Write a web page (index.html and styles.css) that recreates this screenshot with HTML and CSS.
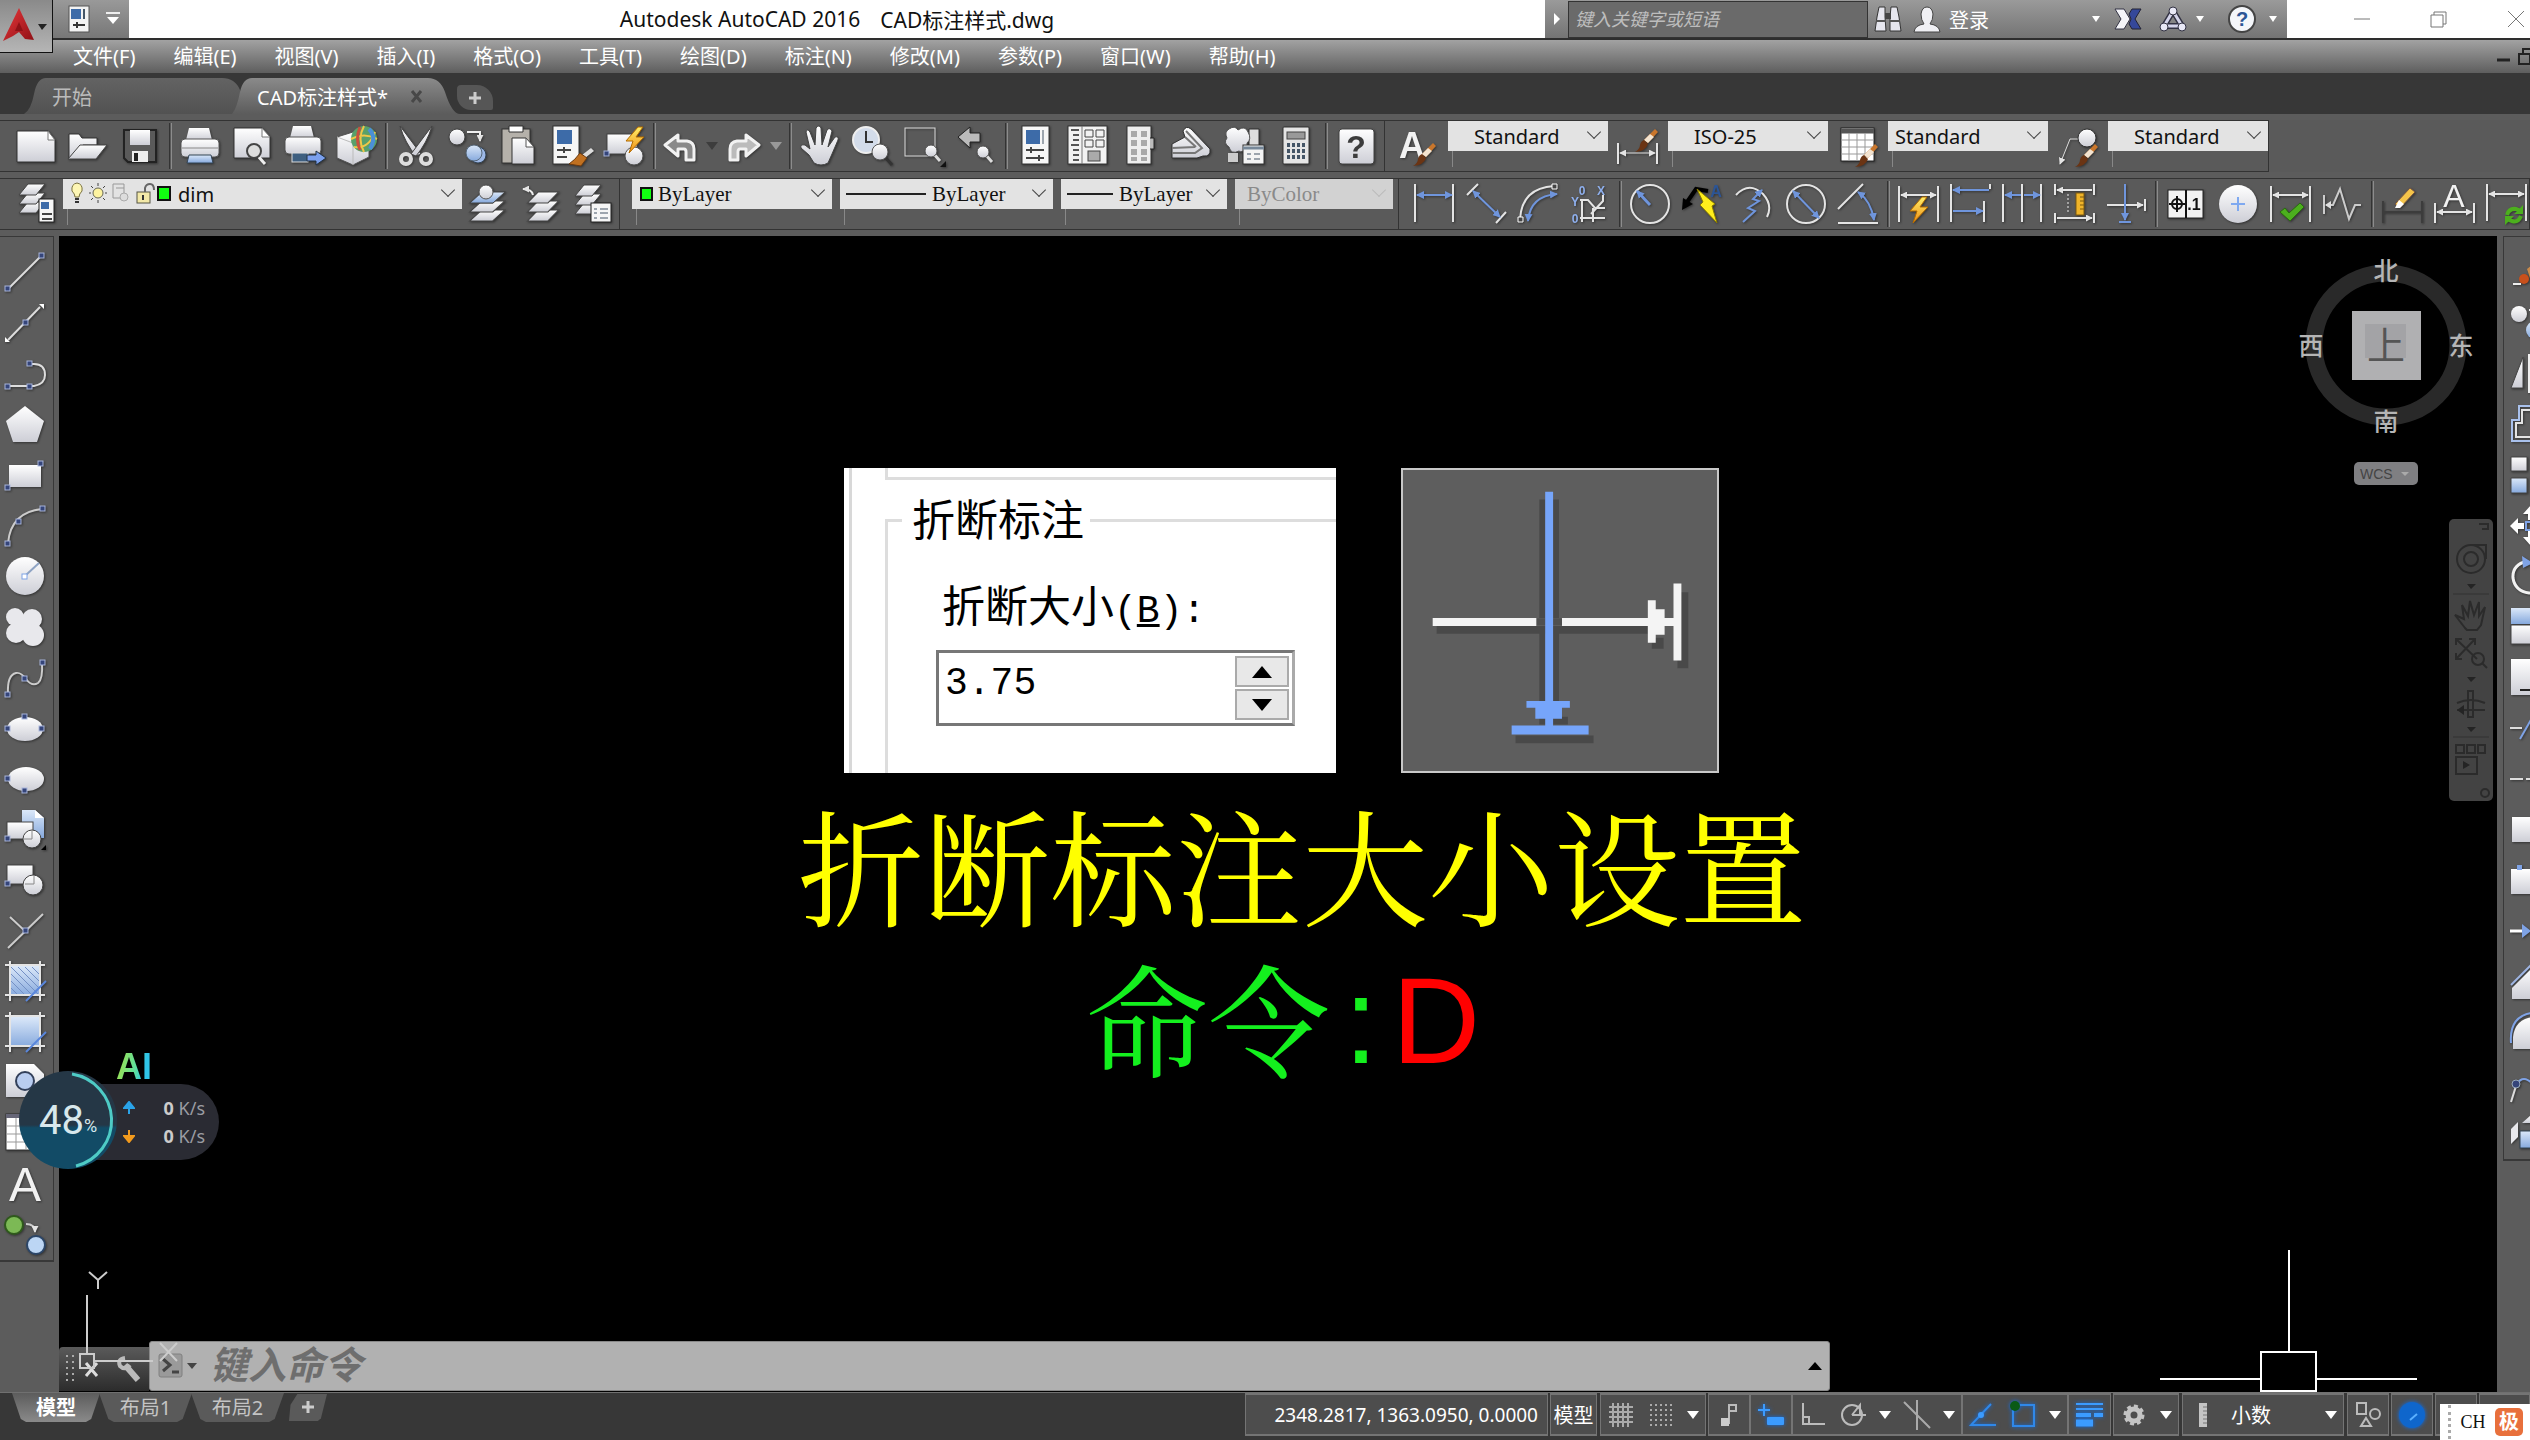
FILE: index.html
```html
<!DOCTYPE html>
<html lang="zh-CN">
<head>
  <meta charset="utf-8">
  <title>Autodesk AutoCAD 2016 CAD标注样式.dwg</title>
  <link rel="stylesheet" href="styles.css">
</head>
<body>

  <!-- Icon sprite -->
  <svg class="sprite" width="0" height="0" aria-hidden="true">
    <defs>
      <linearGradient id="gw" x1="0" y1="0" x2="0" y2="1"><stop offset="0" stop-color="#fff"/><stop offset="1" stop-color="#cdced6"/></linearGradient>
      <linearGradient id="gb" x1="0" y1="0" x2="0" y2="1"><stop offset="0" stop-color="#dbe8f9"/><stop offset="1" stop-color="#86a9dd"/></linearGradient>
      <linearGradient id="gr" x1="0" y1="0" x2="1" y2="1"><stop offset="0" stop-color="#e8363a"/><stop offset="1" stop-color="#8f1116"/></linearGradient>
      <linearGradient id="go" x1="0" y1="0" x2="0" y2="1"><stop offset="0" stop-color="#fff06a"/><stop offset="1" stop-color="#f08c12"/></linearGradient>
      <marker id="ab" viewBox="0 0 8 8" refX="7" refY="4" markerWidth="8" markerHeight="8" markerUnits="userSpaceOnUse" orient="auto-start-reverse"><path d="M0 0L8 4L0 8z" fill="#6f95dc"/></marker>
      <marker id="aw" viewBox="0 0 8 8" refX="7" refY="4" markerWidth="7" markerHeight="7" markerUnits="userSpaceOnUse" orient="auto-start-reverse"><path d="M0 0L8 4L0 8z" fill="#e4e4e4"/></marker>
      <g id="brush"><path d="M20 0L23 3L13 14L9 11z" fill="#c9762c"/><path d="M15 5L19 8L13 14L9 11z" fill="#f3e3d0"/><path d="M9 11L13 15Q11 22 0 23Q5 20 5 16Q6 12 9 11z" fill="#6b3413"/></g>
      <g id="sheets" stroke="#444" stroke-width="1"><path d="M2 32L11 21H28L19 32z" fill="url(#gw)"/><path d="M2 23L11 12H28L19 23z" fill="url(#gw)"/><path d="M2 14L11 3H28L19 14z" fill="url(#gw)"/></g>
      <g id="lens"><path d="M8 8L15 16" stroke="#ddd" stroke-width="3"/><circle cx="6" cy="6" r="6" fill="url(#gw)" stroke="#555"/></g>
      <g id="bolt"><path d="M12 0L0 14H7L3 26L18 10H10L17 0z" fill="url(#go)" stroke="#b36b00"/></g>
      <rect id="grip" width="5" height="5" fill="#35457a" stroke="#a9b6dc" stroke-width="1"/>
    </defs>

    <symbol id="i-new" viewBox="0 0 46 46"><path d="M4 8H35L42 17V39H4z" fill="url(#gw)" stroke="#333"/><path d="M35 8V17H42z" fill="#fff" stroke="#777"/></symbol>
    <symbol id="i-open" viewBox="0 0 46 46"><path d="M4 11H14L17 15H32V22H18L4 35z" fill="url(#gw)" stroke="#333"/><path d="M3 36L15 22H42L31 36z" fill="url(#gw)" stroke="#444"/></symbol>
    <symbol id="i-save" viewBox="0 0 46 46"><path d="M7 7H39V39H11L7 35z" fill="#5a5a5a" stroke="#222" stroke-width="2"/><rect x="13" y="7" width="20" height="15" fill="url(#gw)"/><rect x="15" y="28" width="16" height="11" fill="#eee"/><rect x="17" y="30" width="4" height="8" fill="#222"/></symbol>
    <symbol id="i-print" viewBox="0 0 46 46"><path d="M12 5H32L35 17H9z" fill="url(#gw)"/><rect x="4" y="16" width="38" height="18" rx="4" fill="url(#gw)" stroke="#555"/><path d="M5 25H41" stroke="#888"/><path d="M12 32H34L36 40H10z" fill="url(#gb)" stroke="#345"/></symbol>
    <symbol id="i-preview" viewBox="0 0 46 46"><path d="M5 5H33L41 14V35H5z" fill="url(#gw)" stroke="#333"/><path d="M33 5V14H41z" fill="#fff" stroke="#777"/><path d="M28 32L36 41" stroke="#eee" stroke-width="3"/><circle cx="25" cy="28" r="7" fill="#ddd" stroke="#444" stroke-width="2"/></symbol>
    <symbol id="i-plot" viewBox="0 0 46 46"><path d="M12 3H30L33 15H9z" fill="url(#gw)"/><rect x="4" y="14" width="36" height="17" rx="4" fill="url(#gw)" stroke="#555"/><rect x="11" y="30" width="16" height="9" fill="#3e5f80" stroke="#ddd"/><path d="M26 32H35V28L45 35L35 42V38H26z" fill="#7ba0ee" stroke="#234"/></symbol>
    <symbol id="i-publish" viewBox="0 0 46 46"><path d="M4 14L20 9L36 15V34L20 42L4 35z" fill="url(#gw)" stroke="#555"/><path d="M20 20V42M4 14L20 20L36 15" stroke="#bbb" fill="none"/><circle cx="31" cy="16" r="13" fill="#58a06a"/><path d="M31 3Q24 16 31 29M18 16Q31 9 44 16M21 24Q36 26 42 9" stroke="#f0c648" stroke-width="2" fill="none"/><path d="M27 4Q22 16 27 27" stroke="#c8503e" stroke-width="3" fill="none"/><path d="M36 6Q44 14 37 26" stroke="#4b8fd8" stroke-width="4" fill="none"/></symbol>
    <symbol id="i-cut" viewBox="0 0 46 46"><path d="M7 3L28 31L23 33Q12 20 7 3z" fill="url(#gw)" stroke="#444"/><path d="M39 3L18 31L23 33Q34 20 39 3z" fill="url(#gw)" stroke="#444"/><circle cx="13" cy="36" r="5" fill="none" stroke="#ddd" stroke-width="4"/><circle cx="33" cy="36" r="5" fill="none" stroke="#ddd" stroke-width="4"/></symbol>
    <symbol id="i-copy" viewBox="0 0 46 46"><circle cx="12" cy="14" r="8" fill="url(#gw)" stroke="#444"/><path d="M22 9H35V18" stroke="#eee" stroke-width="2" fill="none" marker-end="url(#aw)"/><circle cx="33" cy="32" r="8" fill="#9db8e6" stroke="#345"/><circle cx="29" cy="30" r="8" fill="url(#gb)" stroke="#567"/></symbol>
    <symbol id="i-paste" viewBox="0 0 46 46"><rect x="5" y="6" width="28" height="34" fill="#b5b1aa" stroke="#333"/><path d="M12 3H26V9H12z" fill="#fff" stroke="#333"/><path d="M15 15H29L37 24V41H15z" fill="url(#gw)" stroke="#333"/><path d="M29 15V24H37z" fill="#fff" stroke="#555"/></symbol>
    <symbol id="i-match" viewBox="0 0 46 46"><rect x="4" y="3" width="26" height="38" fill="#f6f6f6" stroke="#333"/><rect x="8" y="7" width="15" height="14" fill="#3d6ba8"/><path d="M8 27H22M8 34H18M15 24V30" stroke="#444" stroke-width="2"/><path d="M42 25L45 28L36 35L33 32z" fill="#ddd"/><path d="M31 30L38 35L32 43L20 41Q26 37 31 30z" fill="#c07020" stroke="#6b3a10"/></symbol>
    <symbol id="i-block" viewBox="0 0 46 46"><rect x="6" y="11" width="30" height="20" fill="url(#gw)" stroke="#444"/><circle cx="33" cy="33" r="9" fill="url(#gw)" stroke="#555"/><use href="#grip" x="3" y="28"/><use href="#bolt" x="25" y="4"/></symbol>
    <symbol id="i-undo" viewBox="0 0 46 46"><path d="M8 22L21 12V18H30Q37 19 37 26V37H29V29Q29 26 27 26H21V33z" fill="#8a8a8a" stroke="#f2f2f2" stroke-width="3" stroke-linejoin="round"/></symbol>
    <symbol id="i-redo" viewBox="0 0 46 46"><path d="M38 22L25 12V18H16Q9 19 9 26V37H17V29Q17 26 19 26H25V33z" fill="#bbb" stroke="#f2f2f2" stroke-width="3" stroke-linejoin="round"/></symbol>
    <symbol id="i-hand" viewBox="0 0 46 46"><path d="M17 40L12 32L4 25Q3 21 8 22L13 26L9 9Q10 5 13 9L18 22L19 5Q22 1 24 5L25 22L30 7Q33 4 35 8L31 24L38 14Q42 13 41 17L35 31L31 40Q24 44 17 40z" fill="url(#gw)" stroke="#444"/></symbol>
    <symbol id="i-rtzoom" viewBox="0 0 46 46"><circle cx="17" cy="17" r="13" fill="#d3dcea" stroke="#eee" stroke-width="2"/><path d="M17 8V19H24" stroke="#333" fill="none" stroke-width="2"/><path d="M36 34L43 42" stroke="#333" stroke-width="3"/><circle cx="31" cy="29" r="8" fill="url(#gw)" stroke="#555"/></symbol>
    <symbol id="i-winzoom" viewBox="0 0 46 46"><rect x="4" y="5" width="30" height="28" fill="none" stroke="#ddd"/><use href="#lens" x="24" y="22"/><path d="M45 38V44H39z" fill="#111"/></symbol>
    <symbol id="i-prezoom" viewBox="0 0 46 46"><path d="M5 14L17 4V10H27V19H17V25z" fill="#bbb" stroke="#222"/><use href="#lens" x="24" y="23"/></symbol>
    <symbol id="i-props" viewBox="0 0 46 46"><rect x="9" y="3" width="27" height="38" fill="#f6f6f6" stroke="#333"/><rect x="13" y="7" width="14" height="14" fill="#3d6ba8"/><path d="M30 7V21" stroke="#456"/><path d="M13 27H31M18 24V30M13 35H31M26 32V38" stroke="#444" stroke-width="2"/></symbol>
    <symbol id="i-dc" viewBox="0 0 46 46"><rect x="3" y="3" width="39" height="38" fill="#f2f2f2" stroke="#333"/><path d="M6 7H14M8 12H14M8 17H14M6 22H14M8 27H14M8 32H14M8 37H14" stroke="#555" stroke-width="2"/><path d="M17 3V41" stroke="#777"/><path d="M20 7H28V14H20zM31 7H39V14H31zM20 17H28V24H20zM31 17H39V24H31z" fill="none" stroke="#444"/><rect x="23" y="28" width="12" height="10" fill="#aaa" stroke="#444"/></symbol>
    <symbol id="i-palette" viewBox="0 0 46 46"><rect x="10" y="3" width="24" height="38" fill="#eee" stroke="#333"/><path d="M33 15H37V26H33" fill="#bbb" stroke="#222"/><path d="M14 8H20V14H14zM24 8H30V14H24zM14 17H20V23H14zM24 17H30V23H24zM14 26H20V32H14zM24 26H30V32H24zM14 34H20V38H14zM24 34H30V38H24z" fill="#a9a9a9"/></symbol>
    <symbol id="i-sheet" viewBox="0 0 46 46"><path d="M3 21L16 14L14 8Q17 2 22 6L41 26Q42 34 34 33L28 35H3z" fill="url(#gw)" stroke="#333"/><path d="M3 25L26 24M3 30H26L33 25L17 8M16 14L27 24" stroke="#777" fill="none" stroke-width="2"/></symbol>
    <symbol id="i-markup" viewBox="0 0 46 46"><path d="M28 6H38V30H28z" fill="#ddd" stroke="#333"/><path d="M8 6Q14 2 17 7Q24 2 27 9Q31 16 26 20V26Q20 30 18 28Q10 32 8 24Q2 20 6 15Q3 9 8 6z" fill="url(#gw)" stroke="#555"/><rect x="7" y="30" width="10" height="9" fill="#ccc"/><rect x="22" y="22" width="21" height="19" fill="#f4f4f4" stroke="#333"/><path d="M22 25H43" stroke="#789" stroke-width="3"/><path d="M26 31H30M33 31H39M26 36H30M33 36H39" stroke="#456"/></symbol>
    <symbol id="i-calc" viewBox="0 0 46 46"><rect x="10" y="4" width="26" height="37" rx="1" fill="#e5e5e5" stroke="#333"/><rect x="14" y="9" width="18" height="7" fill="#999" stroke="#444"/><path d="M14 22H32M14 28H32M14 34H32" stroke="#456" stroke-width="4" stroke-dasharray="3 2"/></symbol>

    <symbol id="i-dimstyle" viewBox="0 0 46 46"><path d="M3 20V41M42 20V41" stroke="#e4e4e4" stroke-width="2"/><path d="M5 30H40" stroke="#e4e4e4" marker-start="url(#aw)" marker-end="url(#aw)"/><use href="#brush" x="20" y="6"/></symbol>
    <symbol id="i-tablestyle" viewBox="0 0 46 46"><rect x="6" y="5" width="33" height="33" fill="#fff" stroke="#222"/><path d="M6 8H39" stroke="#555" stroke-width="5"/><path d="M6 17H39M6 24H39M6 31H39M14 10V38M22 10V38M30 10V38" stroke="#999"/><use href="#brush" x="20" y="21"/></symbol>
    <symbol id="i-leaderstyle" viewBox="0 0 46 46"><path d="M24 16H15L5 41" stroke="#ddd" fill="none" stroke-width="1" marker-end="url(#aw)"/><circle cx="32" cy="15" r="9" fill="url(#gw)" stroke="#333"/><use href="#brush" x="20" y="21"/></symbol>

    <symbol id="i-layerprops" viewBox="0 0 46 46"><use href="#sheets" x="3" y="0"/><rect x="25" y="18" width="15" height="23" fill="#f6f6f6" stroke="#222"/><rect x="27" y="21" width="8" height="7" fill="#3d6ba8"/><path d="M28 33H38M28 38H38" stroke="#444" stroke-width="2"/></symbol>
    <symbol id="i-laycur" viewBox="0 0 46 46"><g transform="translate(2 8) scale(1.35 1)"><use href="#sheets"/></g><path d="M5 22L17 11H40L28 22z" fill="url(#gb)" stroke="#444"/><circle cx="21" cy="11" r="7" fill="url(#gw)" stroke="#555"/></symbol>
    <symbol id="i-layprev" viewBox="0 0 46 46"><g transform="translate(8 8) scale(1.2 1)"><use href="#sheets"/></g><path d="M16 14Q15 8 6 8" stroke="#eee" fill="none" stroke-width="2" marker-end="url(#aw)"/></symbol>
    <symbol id="i-laystate" viewBox="0 0 46 46"><use href="#sheets" x="4" y="1"/><rect x="22" y="22" width="20" height="19" fill="#f6f6f6" stroke="#222"/><path d="M25 28H28M31 28H39M25 32H28M31 32H39M25 37H28M31 37H39" stroke="#456"/></symbol>

    <symbol id="i-linear" viewBox="0 0 46 46"><path d="M4 3V41M42 3V41" stroke="#e4e4e4" stroke-width="2"/><path d="M6 14H41" stroke="#6f95dc" stroke-width="2" marker-start="url(#ab)" marker-end="url(#ab)"/></symbol>
    <symbol id="i-aligned" viewBox="0 0 46 46"><path d="M4 14L15 3M33 42L43 31" stroke="#e4e4e4" stroke-width="2"/><path d="M10 10L37 36" stroke="#6f95dc" stroke-width="2" marker-start="url(#ab)" marker-end="url(#ab)"/></symbol>
    <symbol id="i-arclen" viewBox="0 0 46 46"><path d="M5 38Q7 7 39 5" stroke="#e4e4e4" stroke-width="2" fill="none"/><path d="M37 3H42V8H37zM3 36H8V41H3z" fill="#444" stroke="#fff"/><path d="M13 40Q15 15 42 13" stroke="#6f95dc" stroke-width="2" fill="none" marker-start="url(#ab)" marker-end="url(#ab)"/></symbol>
    <symbol id="i-ordinate" viewBox="0 0 46 46"><path d="M15 19V41M13 19H21L28 27H38M26 27V41M36 14V20L24 33M13 37H38" stroke="#e4e4e4" stroke-width="2" fill="none"/></symbol>
    <symbol id="i-radius" viewBox="0 0 46 46"><circle cx="23" cy="23" r="19" fill="none" stroke="#e4e4e4" stroke-width="2"/><path d="M23 24L10 10" stroke="#6f95dc" stroke-width="3" marker-end="url(#ab)"/></symbol>
    <symbol id="i-quickl" viewBox="0 0 46 46"><path d="M29 10L17 8L6 24" stroke="#000" stroke-width="4" fill="none"/><path d="M3 29L4 17L14 23z"/><path d="M18 8L24 21L21 24L38 42L33 25L36 23z" fill="#ffee1c" stroke="#8a7d00"/></symbol>
    <symbol id="i-jogged" viewBox="0 0 46 46"><path d="M5 14Q18 0 32 13Q42 24 36 36" stroke="#e4e4e4" stroke-width="2" fill="none"/><path d="M12 41L24 30L17 27L28 20L22 18L31 9" stroke="#6f95dc" stroke-width="2" fill="none" marker-end="url(#ab)"/></symbol>
    <symbol id="i-diameter" viewBox="0 0 46 46"><circle cx="23" cy="23" r="19" fill="none" stroke="#e4e4e4" stroke-width="2"/><path d="M10 10L36 37" stroke="#6f95dc" stroke-width="2" marker-start="url(#ab)" marker-end="url(#ab)"/></symbol>
    <symbol id="i-angular" viewBox="0 0 46 46"><path d="M3 28L28 3M3 42H43" stroke="#e4e4e4" stroke-width="2"/><path d="M23 11Q36 20 39 39" stroke="#6f95dc" stroke-width="2" fill="none" marker-start="url(#ab)" marker-end="url(#ab)"/></symbol>
    <symbol id="i-quickdim" viewBox="0 0 46 46"><path d="M4 5V41M43 5V41" stroke="#e4e4e4" stroke-width="2"/><path d="M6 14H41" stroke="#e4e4e4" stroke-width="2" marker-start="url(#aw)" marker-end="url(#aw)"/><use href="#bolt" x="15" y="16"/></symbol>
    <symbol id="i-baseline" viewBox="0 0 46 46"><path d="M4 3V41M43 3V8M37 20V41" stroke="#e4e4e4" stroke-width="2"/><path d="M6 9H42M6 30H36" stroke="#6f95dc" stroke-width="2" marker-start="url(#ab)" marker-end="url(#ab)"/></symbol>
    <symbol id="i-continue" viewBox="0 0 46 46"><path d="M4 3V41M23 3V41M42 3V41" stroke="#e4e4e4" stroke-width="2"/><path d="M6 14H22M25 14H41" stroke="#6f95dc" stroke-width="2" marker-start="url(#ab)" marker-end="url(#ab)"/></symbol>
    <symbol id="i-space" viewBox="0 0 46 46"><path d="M4 3V14M43 3V14M4 32V42M43 32V42" stroke="#e4e4e4" stroke-width="2"/><path d="M6 9H41M6 37H41" stroke="#e4e4e4" stroke-width="2" marker-start="url(#aw)" marker-end="url(#aw)"/><path d="M17 13V33" stroke="#eee" stroke-dasharray="2 2"/><rect x="25" y="12" width="8" height="22" fill="#f0b429" stroke="#7d5a10"/><path d="M29 16H33M29 20H33M29 24H33M29 28H33" stroke="#7d5a10"/></symbol>
    <symbol id="i-break" viewBox="0 0 46 46"><path d="M4 24H40" stroke="#e4e4e4" stroke-width="2" marker-end="url(#aw)"/><path d="M42 18V30" stroke="#e4e4e4" stroke-width="2"/><path d="M22 3V39" stroke="#6f95dc" stroke-width="2" marker-end="url(#ab)"/><path d="M16 41H28" stroke="#6f95dc" stroke-width="2"/></symbol>
    <symbol id="i-tol" viewBox="0 0 46 46"><rect x="5" y="9" width="35" height="28" fill="#f2f2f2" stroke="#222"/><path d="M23 9V37" stroke="#111" stroke-width="2"/><circle cx="14" cy="23" r="5" fill="none" stroke="#111" stroke-width="2"/><path d="M6 23H22M14 15V31" stroke="#111" stroke-width="2"/></symbol>
    <symbol id="i-center" viewBox="0 0 46 46"><circle cx="23" cy="23" r="19" fill="url(#gw)"/><path d="M23 16V30M16 23H30" stroke="#7fa9f0" stroke-width="2"/></symbol>
    <symbol id="i-inspect" viewBox="0 0 46 46"><path d="M4 5V41M43 5V41" stroke="#e4e4e4" stroke-width="2"/><path d="M6 14H41" stroke="#e4e4e4" stroke-width="2" marker-start="url(#aw)" marker-end="url(#aw)"/><path d="M13 31L18 27L22 32L33 22L37 26L23 40z" fill="#4caf1e" stroke="#2a6a10"/></symbol>
    <symbol id="i-jogline" viewBox="0 0 46 46"><path d="M5 14V33M7 24H14L21 8L30 38L36 24H42" stroke="#ccc" stroke-width="2" fill="none"/><path d="M6 24L12 20V28z" fill="#ddd"/></symbol>
    <symbol id="i-dimedit" viewBox="0 0 46 46"><path d="M4 20V42M43 20V42M5 31H42" stroke="#3c3c3c" stroke-width="2"/><path d="M31 7L36 11L21 27L16 23z" fill="#f4c44a" stroke="#754"/><path d="M20 19L25 23L21 27L16 27z" fill="#fff"/></symbol>
    <symbol id="i-dimtext" viewBox="0 0 46 46"><path d="M4 22V42M43 22V42" stroke="#e4e4e4" stroke-width="2"/><path d="M6 31H41" stroke="#e4e4e4" stroke-width="2" marker-start="url(#aw)" marker-end="url(#aw)"/></symbol>
    <symbol id="i-dimupd" viewBox="0 0 46 46"><path d="M4 3V40M43 3V40" stroke="#e4e4e4" stroke-width="2"/><path d="M6 13H41" stroke="#e4e4e4" stroke-width="2" marker-start="url(#aw)" marker-end="url(#aw)"/><path d="M24 34Q26 27 33 28L38 30M38 35Q35 42 29 40L24 38" stroke="#4caf1e" stroke-width="4" fill="none"/><path d="M40 24V33H31zM22 44V35H31z" fill="#4caf1e"/></symbol>

    <symbol id="d-line" viewBox="0 0 46 46"><path d="M7 39L39 7" stroke="#ddd" stroke-width="2"/><use href="#grip" x="3" y="37"/><use href="#grip" x="37" y="4"/></symbol>
    <symbol id="d-xline" viewBox="0 0 46 46"><path d="M6 40L38 7" stroke="#ddd" stroke-width="2"/><path d="M42 4V9L37 4zM3 42V37L8 42z" fill="#fff"/><use href="#grip" x="21" y="20"/></symbol>
    <symbol id="d-pline" viewBox="0 0 46 46"><path d="M6 35H32Q43 33 43 24Q43 13 32 13H27" stroke="#ddd" stroke-width="2" fill="none"/><use href="#grip" x="3" y="33"/><use href="#grip" x="25" y="33"/><use href="#grip" x="25" y="10"/></symbol>
    <symbol id="d-poly" viewBox="0 0 46 46"><path d="M23 5L42 20L35 41H11L4 20z" fill="url(#gw)"/></symbol>
    <symbol id="d-rect" viewBox="0 0 46 46"><rect x="7" y="13" width="32" height="22" fill="url(#gw)"/><use href="#grip" x="3" y="33"/><use href="#grip" x="36" y="9"/></symbol>
    <symbol id="d-arc" viewBox="0 0 46 46"><path d="M6 40Q9 9 40 6" stroke="#ccc" stroke-width="2" fill="none"/><use href="#grip" x="3" y="38"/><use href="#grip" x="14" y="16"/><use href="#grip" x="38" y="3"/></symbol>
    <symbol id="d-circle" viewBox="0 0 46 46"><circle cx="23" cy="23" r="19" fill="url(#gw)"/><path d="M24 22L37 10" stroke="#8fa4c4" stroke-width="2"/><rect x="20" y="21" width="5" height="5" fill="#fff" stroke="#7fa3e6"/></symbol>
    <symbol id="d-cloud" viewBox="0 0 46 46"><g fill="#e8e8ec"><circle cx="13" cy="13" r="9"/><circle cx="30" cy="15" r="10"/><circle cx="14" cy="29" r="10"/><circle cx="31" cy="31" r="11"/><circle cx="22" cy="22" r="8"/></g></symbol>
    <symbol id="d-spline" viewBox="0 0 46 46"><path d="M6 39Q5 20 14 18Q19 17 24 24Q30 32 36 28Q41 24 40 8" stroke="#ccc" stroke-width="2" fill="none"/><use href="#grip" x="3" y="37"/><use href="#grip" x="20" y="21"/><use href="#grip" x="38" y="5"/></symbol>
    <symbol id="d-ellipse" viewBox="0 0 46 46"><ellipse cx="23" cy="24" rx="18" ry="12" fill="url(#gw)"/><use href="#grip" x="3" y="21"/><use href="#grip" x="37" y="21"/><use href="#grip" x="20" y="9"/></symbol>
    <symbol id="d-ellarc" viewBox="0 0 46 46"><ellipse cx="24" cy="23" rx="18" ry="12" fill="url(#gw)"/><use href="#grip" x="3" y="20"/><use href="#grip" x="20" y="32"/></symbol>
    <symbol id="d-insert" viewBox="0 0 46 46"><path d="M20 4H33L42 12V32H20z" fill="url(#gb)"/><path d="M33 4V12H42z" fill="#fff"/><rect x="5" y="16" width="26" height="17" fill="url(#gw)" stroke="#444"/><circle cx="30" cy="33" r="9" fill="url(#gw)" stroke="#444"/><path d="M30 24V33H21" stroke="#888" fill="none"/><use href="#grip" x="3" y="30"/><path d="M44 39V44H39z"/></symbol>
    <symbol id="d-mkblock" viewBox="0 0 46 46"><rect x="5" y="8" width="26" height="19" fill="url(#gw)" stroke="#444"/><circle cx="31" cy="28" r="10" fill="url(#gw)" stroke="#444"/><path d="M32 18V27H23" stroke="#888" fill="none"/><use href="#grip" x="3" y="24"/></symbol>
    <symbol id="d-point" viewBox="0 0 46 46"><path d="M6 40L41 6M8 9L24 24" stroke="#ccc" stroke-width="2"/><use href="#grip" x="21" y="20"/></symbol>
    <symbol id="d-hatch" viewBox="0 0 46 46"><rect x="8" y="8" width="30" height="30" fill="url(#gb)"/><path d="M9 30L16 37M9 23L23 37M9 16L30 37M9 9L37 37M16 9L37 30M23 9L37 23M30 9L37 16" stroke="#7490c4"/><path d="M3 7H43M3 37H43M8 3V43M38 3V43" stroke="#e4e4e4" stroke-width="2"/><path d="M24 43L44 23" stroke="#5a86dc" stroke-width="2"/></symbol>
    <symbol id="d-grad" viewBox="0 0 46 46"><rect x="8" y="8" width="30" height="30" fill="url(#gb)"/><path d="M3 7H43M3 37H43M8 3V43M38 3V43" stroke="#e4e4e4" stroke-width="2"/><path d="M24 43L44 23" stroke="#5a86dc" stroke-width="2"/></symbol>
    <symbol id="d-region" viewBox="0 0 46 46"><path d="M4 4H32L42 14V37H4z" fill="url(#gw)"/><circle cx="23" cy="21" r="9" fill="#b9cdf0" stroke="#33405a" stroke-width="2"/></symbol>
    <symbol id="d-table" viewBox="0 0 46 46"><rect x="4" y="4" width="38" height="36" fill="#fff" stroke="#333"/><path d="M4 6H42" stroke="#667" stroke-width="4"/><path d="M4 16H42M4 24H42M4 32H42M14 8V40M24 8V40M34 8V40" stroke="#999"/></symbol>
    <symbol id="d-addsel" viewBox="0 0 46 46"><circle cx="12" cy="13" r="9" fill="#7cb955" stroke="#2f5a1c" stroke-width="2"/><path d="M24 12Q33 12 33 20" stroke="#ccc" stroke-width="2" fill="none" marker-end="url(#aw)"/><circle cx="34" cy="33" r="9" fill="#bcd6f4" stroke="#2c4668" stroke-width="2"/></symbol>

    <symbol id="m-erase" viewBox="0 0 46 46"><path d="M4 35H12M24 35H40" stroke="#eee" stroke-width="2"/><path d="M18 20L38 4L42 12L22 32z" fill="#c98a4a"/><circle cx="15" cy="30" r="5" fill="#c8501c"/></symbol>
    <symbol id="m-copy" viewBox="0 0 46 46"><circle cx="10" cy="14" r="8" fill="url(#gw)"/><path d="M20 10H32V20" stroke="#eee" fill="none" stroke-width="2"/><circle cx="26" cy="30" r="9" fill="url(#gb)"/></symbol>
    <symbol id="m-mirror" viewBox="0 0 46 46"><path d="M14 6V37H2z" fill="url(#gw)" stroke="#444"/><path d="M20 3V42" stroke="#eee" stroke-width="2"/><path d="M26 6V37H40z" fill="url(#gb)"/></symbol>
    <symbol id="m-offset" viewBox="0 0 46 46"><path d="M42 5H10V19H3V40H42" fill="none" stroke="#a9c1ec" stroke-width="2"/><path d="M42 9H13V22H7V36H42" fill="none" stroke="#e4e4e4" stroke-width="2"/></symbol>
    <symbol id="m-array" viewBox="0 0 46 46"><path d="M2 5H18V19H2zM24 5H40V19H24z" fill="url(#gw)" stroke="#444"/><path d="M2 26H18V41H2zM24 26H40V41H24z" fill="url(#gb)" stroke="#444"/></symbol>
    <symbol id="m-move" viewBox="0 0 46 46"><path d="M1 23L9 15V20H15V26H9V31zM22 2L30 11H25V17H19V11H14zM22 43L30 34H25V28H19V34H14z" fill="#fff"/><rect x="17" y="19" width="9" height="8" fill="none" stroke="#7fa3e6" stroke-width="2"/></symbol>
    <symbol id="m-rotate" viewBox="0 0 46 46"><path d="M18 8Q3 12 4 25Q6 38 20 40Q36 40 40 25" stroke="#f2f2f2" stroke-width="3" fill="none"/><path d="M13 3L24 10L14 15z" fill="#7fa3e6"/></symbol>
    <symbol id="m-scale" viewBox="0 0 46 46"><rect x="2" y="4" width="40" height="16" fill="url(#gb)"/><rect x="2" y="21" width="26" height="19" fill="url(#gw)" stroke="#444"/></symbol>
    <symbol id="m-stretch" viewBox="0 0 46 46"><path d="M2 4H40V40H2z" fill="url(#gw)"/><path d="M11 35H34" stroke="#222" stroke-width="2"/></symbol>
    <symbol id="m-trim" viewBox="0 0 46 46"><path d="M1 23H13M28 23H40" stroke="#ddd" stroke-width="2"/><path d="M11 34L27 6" stroke="#7fa3e6" stroke-width="2"/></symbol>
    <symbol id="m-extend" viewBox="0 0 46 46"><path d="M1 23H14M17 23H30" stroke="#ddd" stroke-width="2"/><path d="M34 6V40" stroke="#7fa3e6" stroke-width="2"/></symbol>
    <symbol id="m-break1" viewBox="0 0 46 46"><path d="M3 10H40V35H3z" fill="url(#gw)"/></symbol>
    <symbol id="m-break2" viewBox="0 0 46 46"><path d="M2 12H40V37H2z" fill="url(#gw)"/><rect x="8" y="8" width="5" height="5" fill="#7fa3e6"/></symbol>
    <symbol id="m-join" viewBox="0 0 46 46"><path d="M1 23H14" stroke="#fff" stroke-width="3"/><path d="M13 16L22 23L13 30z" fill="#7fa3e6"/></symbol>
    <symbol id="m-chamfer" viewBox="0 0 46 46"><path d="M3 29L24 8H40V40H3z" fill="url(#gw)"/><path d="M2 26L24 4" stroke="#9fb6e4" stroke-width="2"/></symbol>
    <symbol id="m-fillet" viewBox="0 0 46 46"><path d="M4 40V28Q6 10 24 8H40V40z" fill="url(#gw)"/><path d="M2 34Q0 8 22 4" stroke="#7fa3e6" stroke-width="2" fill="none"/></symbol>
    <symbol id="m-blend" viewBox="0 0 46 46"><path d="M2 42L7 26" stroke="#ddd" stroke-width="2"/><path d="M8 24Q14 14 24 24" stroke="#7fa3e6" stroke-width="2" fill="none"/><circle cx="7" cy="24" r="4" fill="#35457a" stroke="#9ab"/></symbol>
    <symbol id="m-explode" viewBox="0 0 46 46"><path d="M2 18L9 11V26L2 33z" fill="#e8e8ec"/><path d="M13 12L22 4H36V12z" fill="url(#gw)"/><rect x="11" y="20" width="26" height="17" fill="url(#gb)" stroke="#345"/></symbol>
  </svg>

  <button class="app-menu" aria-label="应用程序菜单">
    <svg width="48" height="44" viewBox="0 0 48 44"><path d="M17 4L32 36L23 35L17 28L11 32L1 37z" fill="url(#gr)"/><path d="M17 18L21 27H13z" fill="#8f1116"/><path d="M36 20H45L40 26z" fill="#222"/></svg>
  </button>

  <header class="titlebar">
    <div class="quick">
      <button aria-label="特性"><svg width="22" height="28" viewBox="0 0 22 28"><rect x="1" y="1" width="20" height="26" fill="#f2f2f2" stroke="#555"/><rect x="3" y="4" width="10" height="10" fill="#3d6ba8"/><path d="M16 4V14" stroke="#456" stroke-width="2"/><path d="M5 20H17M9 17V23" stroke="#333" stroke-width="2"/></svg></button>
      <button aria-label="自定义快速访问工具栏"><svg width="16" height="14" viewBox="0 0 16 14"><path d="M1 1H15" stroke="#eee" stroke-width="2"/><path d="M2 5H14L8 12z" fill="#fff"/></svg></button>
    </div>
    <h1 class="title"><span>Autodesk AutoCAD 2016</span><span>CAD标注样式.dwg</span></h1>
    <div class="infocenter">
      <button class="expand" aria-label="折叠"><svg width="8" height="14" viewBox="0 0 8 14"><path d="M1 1L7 7L1 13z" fill="#fff"/></svg></button>
      <input class="search" type="text" placeholder="键入关键字或短语" aria-label="搜索">
      <button class="find" aria-label="查找"><svg width="30" height="28" viewBox="0 0 30 28"><path d="M6 2H12V12L13 26H2L4 12zM18 2H24L26 12L28 26H17V12z" fill="#e6e6ee" stroke="#333"/><path d="M12 8H18V14H12z" fill="#444"/><path d="M3 16H13M17 16H27" stroke="#555" stroke-width="2"/></svg></button>
      <button class="signin"><svg width="28" height="28" viewBox="0 0 28 28"><path d="M1 27Q2 20 11 19Q8 15 8 9Q9 2 14 2Q19 2 20 9Q20 15 17 19Q26 20 27 27z" fill="#f0f0f4" stroke="#444"/></svg>登录<i class="down"></i></button>
      <button class="exchange" aria-label="Exchange"><svg width="28" height="24" viewBox="0 0 28 24"><path d="M1 2H10L16 12L10 22H1L7 12z" fill="#f4f4f8" stroke="#334"/><path d="M27 2H18L15 7L17 12L15 17L18 22H27L21 12z" fill="#35489a" stroke="#223"/></svg></button>
      <button class="a360" aria-label="A360"><svg width="30" height="28" viewBox="0 0 30 28"><path d="M15 6L24 21H6z" fill="none" stroke="#334" stroke-width="6" stroke-linejoin="round"/><path d="M15 6L24 21H6z" fill="none" stroke="#d4d4ea" stroke-width="3" stroke-linejoin="round"/><g fill="#e8e8f6" stroke="#334"><circle cx="15" cy="6" r="4"/><circle cx="6" cy="22" r="4"/><circle cx="24" cy="22" r="4"/></g></svg><i class="down"></i></button>
      <button class="help" aria-label="帮助"><svg width="30" height="30" viewBox="0 0 30 30"><circle cx="15" cy="15" r="13" fill="#f4f6fa" stroke="#444" stroke-width="2"/><text x="15" y="22" class="glyph navy" font-size="20">?</text></svg><i class="down"></i></button>
    </div>
    <div class="window-buttons">
      <button aria-label="最小化"><svg width="18" height="18" viewBox="0 0 18 18"><path d="M1 9H17" stroke="#777"/></svg></button>
      <button aria-label="还原"><svg width="18" height="18" viewBox="0 0 18 18"><path d="M1 5H13V17H1zM4 5V2H16V14H13" fill="none" stroke="#777"/></svg></button>
      <button aria-label="关闭"><svg width="18" height="18" viewBox="0 0 18 18"><path d="M1 1L17 17M17 1L1 17" stroke="#777"/></svg></button>
    </div>
  </header>

  <nav class="menubar">
    <a href="#">文件(F)</a>
    <a href="#">编辑(E)</a>
    <a href="#">视图(V)</a>
    <a href="#">插入(I)</a>
    <a href="#">格式(O)</a>
    <a href="#">工具(T)</a>
    <a href="#">绘图(D)</a>
    <a href="#">标注(N)</a>
    <a href="#">修改(M)</a>
    <a href="#">参数(P)</a>
    <a href="#">窗口(W)</a>
    <a href="#">帮助(H)</a>
    <span class="doc-buttons">
      <svg width="34" height="20" viewBox="0 0 34 20"><path d="M1 13H14" stroke="#222" stroke-width="3"/><path d="M23 7H34V17H23zM27 6V2H34" fill="none" stroke="#222" stroke-width="2"/></svg>
    </span>
  </nav>

  <div class="file-tabs">
    <button class="file-tab">开始</button>
    <button class="file-tab active">CAD标注样式*<svg width="13" height="13" viewBox="0 0 13 13"><path d="M2 1L11 12M11 1L2 12" stroke="#484848" stroke-width="3"/></svg></button>
    <button class="new-tab" aria-label="新图形"><svg width="14" height="14" viewBox="0 0 14 14"><path d="M7 1V13M1 7H13" stroke="#ccc" stroke-width="3"/></svg></button>
  </div>

  <div class="toolbars">
    <div class="row">
      <div class="toolbar standard">
        <button class="tool" aria-label="新建"><svg class="ico"><use href="#i-new"/></svg></button>
        <button class="tool" aria-label="打开"><svg class="ico"><use href="#i-open"/></svg></button>
        <button class="tool" aria-label="保存"><svg class="ico"><use href="#i-save"/></svg></button>
        <i class="sep"></i>
        <button class="tool" aria-label="打印"><svg class="ico"><use href="#i-print"/></svg></button>
        <button class="tool" aria-label="打印预览"><svg class="ico"><use href="#i-preview"/></svg></button>
        <button class="tool" aria-label="发布"><svg class="ico"><use href="#i-plot"/></svg></button>
        <button class="tool" aria-label="三维打印"><svg class="ico"><use href="#i-publish"/></svg></button>
        <i class="sep"></i>
        <button class="tool" aria-label="剪切"><svg class="ico"><use href="#i-cut"/></svg></button>
        <button class="tool" aria-label="复制"><svg class="ico"><use href="#i-copy"/></svg></button>
        <button class="tool" aria-label="粘贴"><svg class="ico"><use href="#i-paste"/></svg></button>
        <button class="tool" aria-label="特性匹配"><svg class="ico"><use href="#i-match"/></svg></button>
        <button class="tool" aria-label="块编辑器"><svg class="ico"><use href="#i-block"/></svg></button>
        <i class="sep"></i>
        <button class="tool narrow" aria-label="放弃"><svg class="ico"><use href="#i-undo"/></svg></button>
        <button class="drop dim" aria-label="放弃列表"></button>
        <button class="tool narrow" aria-label="重做"><svg class="ico"><use href="#i-redo"/></svg></button>
        <button class="drop" aria-label="重做列表"></button>
        <i class="sep"></i>
        <button class="tool" aria-label="平移"><svg class="ico"><use href="#i-hand"/></svg></button>
        <button class="tool" aria-label="实时缩放"><svg class="ico"><use href="#i-rtzoom"/></svg></button>
        <button class="tool" aria-label="窗口缩放"><svg class="ico"><use href="#i-winzoom"/></svg></button>
        <button class="tool" aria-label="缩放上一个"><svg class="ico"><use href="#i-prezoom"/></svg></button>
        <i class="sep"></i>
        <button class="tool" aria-label="特性"><svg class="ico"><use href="#i-props"/></svg></button>
        <button class="tool" aria-label="设计中心"><svg class="ico"><use href="#i-dc"/></svg></button>
        <button class="tool" aria-label="工具选项板"><svg class="ico"><use href="#i-palette"/></svg></button>
        <button class="tool" aria-label="图纸集"><svg class="ico"><use href="#i-sheet"/></svg></button>
        <button class="tool" aria-label="标记集"><svg class="ico"><use href="#i-markup"/></svg></button>
        <button class="tool" aria-label="计算器"><svg class="ico"><use href="#i-calc"/></svg></button>
        <i class="sep"></i>
        <button class="tool" aria-label="帮助"><svg class="ico"><rect x="6" y="6" width="35" height="35" rx="3" fill="url(#gw)" stroke="#444"/><text x="23" y="35" class="glyph dark" font-size="32">?</text></svg></button>
      </div>
      <div class="toolbar styles">
        <button class="tool wide" aria-label="文字样式"><svg class="ico"><text x="17" y="35" class="glyph light" font-size="36">A</text><use href="#brush" x="18" y="20"/></svg></button>
        <label class="combo style-combo"><select aria-label="文字样式"><option>Standard</option></select></label>
        <button class="tool wide" aria-label="标注样式"><svg class="ico"><use href="#i-dimstyle"/></svg></button>
        <label class="combo style-combo"><select aria-label="标注样式"><option>ISO-25</option></select></label>
        <button class="tool wide" aria-label="表格样式"><svg class="ico"><use href="#i-tablestyle"/></svg></button>
        <label class="combo style-combo tight"><select aria-label="表格样式"><option>Standard</option></select></label>
        <button class="tool wide" aria-label="多重引线样式"><svg class="ico"><use href="#i-leaderstyle"/></svg></button>
        <label class="combo style-combo"><select aria-label="多重引线样式"><option>Standard</option></select></label>
      </div>
    </div>

    <div class="row">
      <div class="toolbar layers">
        <button class="tool" aria-label="图层特性"><svg class="ico"><use href="#i-layerprops"/></svg></button>
        <label class="combo layer-combo">
          <svg class="layer-state" width="106" height="26" viewBox="0 0 106 26">
            <path d="M12 3Q18 4 17 11Q14 14 14 17H10Q10 14 7 11Q6 4 12 3z" fill="#fdf6b4" stroke="#7a7240"/><path d="M10 19H14M10 22H14" stroke="#333" stroke-width="2"/>
            <circle cx="33" cy="13" r="5" fill="#fdf3a0" stroke="#665"/><path d="M33 3V6M33 20V23M24 13H26M40 13H42M26 6L28 8M38 18L40 20M40 6L38 8M28 18L26 20" stroke="#444"/>
            <path d="M48 4H59V18H48zM51 8H59" fill="none" stroke="#999"/><circle cx="59" cy="17" r="4" fill="#ddd" stroke="#aaa"/>
            <rect x="72" y="12" width="13" height="11" fill="#f3e9a8" stroke="#554"/><path d="M80 12V8Q81 4 85 4Q89 4 89 10" fill="none" stroke="#666" stroke-width="2"/><path d="M78 15V20" stroke="#333" stroke-width="2"/>
            <rect x="93" y="7" width="12" height="13" fill="#1f1" stroke="#111" stroke-width="2"/>
          </svg>
          <select aria-label="图层"><option>dim</option></select>
        </label>
        <button class="tool" aria-label="置为当前"><svg class="ico"><use href="#i-laycur"/></svg></button>
        <button class="tool" aria-label="上一个图层"><svg class="ico"><use href="#i-layprev"/></svg></button>
        <button class="tool" aria-label="图层状态"><svg class="ico"><use href="#i-laystate"/></svg></button>
      </div>
      <div class="toolbar properties">
        <label class="combo prop color"><i class="swatch"></i><select aria-label="颜色"><option>ByLayer</option></select></label>
        <label class="combo prop ltype"><i class="line"></i><select aria-label="线型"><option>ByLayer</option></select></label>
        <label class="combo prop lweight"><i class="line"></i><select aria-label="线宽"><option>ByLayer</option></select></label>
        <label class="combo prop plot"><select aria-label="打印样式" disabled><option>ByColor</option></select></label>
      </div>
      <div class="toolbar dimension">
        <button class="tool" aria-label="线性"><svg class="ico"><use href="#i-linear"/></svg></button>
        <button class="tool" aria-label="对齐"><svg class="ico"><use href="#i-aligned"/></svg></button>
        <button class="tool" aria-label="弧长"><svg class="ico"><use href="#i-arclen"/></svg></button>
        <button class="tool" aria-label="坐标"><svg class="ico"><use href="#i-ordinate"/><g class="glyph blue" font-size="12"><text x="15" y="14">0</text><text x="34" y="14">X</text><text x="8" y="25">Y</text><text x="8" y="42">0</text></g></svg></button>
        <i class="sep"></i>
        <button class="tool" aria-label="半径"><svg class="ico"><use href="#i-radius"/></svg></button>
        <button class="tool" aria-label="快速引线"><svg class="ico"><text x="37" y="16" class="glyph navy" font-size="16">A</text><use href="#i-quickl"/></svg></button>
        <button class="tool" aria-label="折弯"><svg class="ico"><use href="#i-jogged"/></svg></button>
        <button class="tool" aria-label="直径"><svg class="ico"><use href="#i-diameter"/></svg></button>
        <button class="tool" aria-label="角度"><svg class="ico"><use href="#i-angular"/></svg></button>
        <i class="sep"></i>
        <button class="tool" aria-label="快速标注"><svg class="ico"><use href="#i-quickdim"/></svg></button>
        <button class="tool" aria-label="基线"><svg class="ico"><use href="#i-baseline"/></svg></button>
        <button class="tool" aria-label="连续"><svg class="ico"><use href="#i-continue"/></svg></button>
        <button class="tool" aria-label="等距标注"><svg class="ico"><use href="#i-space"/></svg></button>
        <button class="tool" aria-label="折断标注"><svg class="ico"><use href="#i-break"/></svg></button>
        <i class="sep"></i>
        <button class="tool" aria-label="公差"><svg class="ico"><use href="#i-tol"/><text x="31" y="29" class="glyph black" font-size="16">.1</text></svg></button>
        <button class="tool" aria-label="圆心标记"><svg class="ico"><use href="#i-center"/></svg></button>
        <button class="tool" aria-label="检验"><svg class="ico"><use href="#i-inspect"/></svg></button>
        <button class="tool" aria-label="折弯线性"><svg class="ico"><use href="#i-jogline"/></svg></button>
        <i class="sep"></i>
        <button class="tool" aria-label="编辑标注"><svg class="ico"><use href="#i-dimedit"/></svg></button>
        <button class="tool" aria-label="编辑标注文字"><svg class="ico"><use href="#i-dimtext"/><text x="23" y="26" class="glyph light thin" font-size="32">A</text></svg></button>
        <button class="tool" aria-label="标注更新"><svg class="ico"><use href="#i-dimupd"/></svg></button>
      </div>
    </div>
  </div>

  <div class="workspace">
    <aside class="side left">
      <div class="side-tools draw">
        <button aria-label="直线"><svg class="ico"><use href="#d-line"/></svg></button>
        <button aria-label="构造线"><svg class="ico"><use href="#d-xline"/></svg></button>
        <button aria-label="多段线"><svg class="ico"><use href="#d-pline"/></svg></button>
        <button aria-label="多边形"><svg class="ico"><use href="#d-poly"/></svg></button>
        <button aria-label="矩形"><svg class="ico"><use href="#d-rect"/></svg></button>
        <button aria-label="圆弧"><svg class="ico"><use href="#d-arc"/></svg></button>
        <button aria-label="圆"><svg class="ico"><use href="#d-circle"/></svg></button>
        <button aria-label="修订云线"><svg class="ico"><use href="#d-cloud"/></svg></button>
        <button aria-label="样条曲线"><svg class="ico"><use href="#d-spline"/></svg></button>
        <button aria-label="椭圆"><svg class="ico"><use href="#d-ellipse"/></svg></button>
        <button aria-label="椭圆弧"><svg class="ico"><use href="#d-ellarc"/></svg></button>
        <button aria-label="插入块"><svg class="ico"><use href="#d-insert"/></svg></button>
        <button aria-label="创建块"><svg class="ico"><use href="#d-mkblock"/></svg></button>
        <button aria-label="点"><svg class="ico"><use href="#d-point"/></svg></button>
        <button aria-label="图案填充"><svg class="ico"><use href="#d-hatch"/></svg></button>
        <button aria-label="渐变色"><svg class="ico"><use href="#d-grad"/></svg></button>
        <button aria-label="面域"><svg class="ico"><use href="#d-region"/></svg></button>
        <button aria-label="表格"><svg class="ico"><use href="#d-table"/></svg></button>
        <button aria-label="多行文字"><svg class="ico"><text x="23" y="40" class="glyph light thin" font-size="48">A</text></svg></button>
        <button aria-label="添加选定对象"><svg class="ico"><use href="#d-addsel"/></svg></button>
      </div>
    </aside>

    <main class="canvas">
      <div class="artwork">
        <div class="pictures">
          <div class="dialog">
            <div class="group-above"></div>
            <fieldset>
              <legend>折断标注</legend>
              <label for="break-size">折断大小<span class="latin">(<u>B</u>):</span></label>
              <div class="spin">
                <input id="break-size" type="text" value="3.75">
                <div class="spin-buttons">
                  <button aria-label="增大"><svg width="20" height="12" viewBox="0 0 20 12"><path d="M10 0L20 12H0z"/></svg></button>
                  <button aria-label="减小"><svg width="20" height="12" viewBox="0 0 20 12"><path d="M0 0H20L10 12z"/></svg></button>
                </div>
              </div>
            </fieldset>
          </div>
          <svg class="break-icon" width="318" height="305" viewBox="0 0 318 305">
            <g fill="#3c3c3c" opacity=".6"><path d="M34 158H248V166H34zM252 170H264V181H252zM278 124H289V201H278zM152 30H158V235H152zM138 30H144V235H138zM114 269H193V277H114zM138 250H167V258H138z"/></g>
            <path d="M30 150H248V132H256V141H265V150H274V115H282V193H274V158H265V167H256V175H248V158H30z" fill="#f4f4f4"/>
            <path d="M135 150H161V158H135z" fill="#505050"/>
            <path d="M144 22H152V234H169V241H161V252H152V259H188V268H110V259H144V252H134V241H125V234H144z" fill="#76a5fa"/>
          </svg>
        </div>
        <p class="caption">折断标注大小设置</p>
        <p class="command">命令<span class="colon">:</span><span class="key">D</span></p>
      </div>

      <svg class="viewcube" width="190" height="190" viewBox="0 0 190 190">
        <circle cx="95" cy="95" r="72" fill="none" stroke="#292929" stroke-width="17"/>
        <rect x="61" y="61" width="69" height="69" fill="#b0b0b2"/>
        <rect x="74" y="74" width="41" height="34" fill="#a3a3a6"/>
        <text class="top-face" x="95" y="109">上</text>
        <text x="95" y="30">北</text>
        <text x="95" y="181">南</text>
        <text x="20" y="105">西</text>
        <text x="170" y="105">东</text>
      </svg>
      <button class="wcs">WCS</button>

      <svg class="navbar" width="44" height="282" viewBox="0 0 44 282">
        <g fill="none" stroke="#2b2b2b" stroke-width="2">
          <path d="M30 5H39V10H33"/>
          <circle cx="22" cy="40" r="14"/><circle cx="22" cy="40" r="7"/><path d="M22 26H37V40"/>
          <path d="M4 75H40M4 218H40" stroke="#3a3a3a"/>
          <path d="M16 109L6 96L15 100L13 86L19 97L21 82L25 96L30 83L30 97L36 88L32 106L28 111H18z"/>
          <path d="M7 120L28 140M26 120L7 140M7 126V120H13M20 120H26V126M7 134V140H13"/><circle cx="29" cy="140" r="6"/><path d="M33 144L38 149"/>
          <path d="M19 172H24V198H19zM8 191H36M8 184Q22 178 36 184"/>
          <path d="M7 226H15V234H7zM18 226H26V234H18zM29 226H36V234H29zM7 238H28V255H7z"/>
          <circle cx="36" cy="274" r="4"/>
        </g>
        <g fill="#242424"><path d="M18 65H27L22 70zM18 158H27L22 163zM18 208H27L22 213zM8 191L15 186V196zM14 242L21 246L14 250z"/></g>
      </svg>

      <svg class="crosshair" width="260" height="142" viewBox="0 0 260 142"><path d="M130 0V102M1 129H102M157 129H258M102 102H157V141H102z" fill="none" stroke="#fff" stroke-width="2"/></svg>

      <div class="cmdline">
        <div class="cmd-grip">
          <svg width="90" height="44" viewBox="0 0 90 44"><path d="M8 8V38M14 8V38" stroke="#aaa" stroke-width="2" stroke-dasharray="2 4"/><path d="M27 16L38 29M38 16L27 29" stroke="#ddd" stroke-width="3"/><path d="M66 18L79 33" stroke="#bbb" stroke-width="6"/><path d="M66 11Q58 12 61 19Q66 24 71 18" stroke="#bbb" stroke-width="4" fill="none"/></svg>
        </div>
        <div class="cmd-box">
          <svg width="40" height="26" viewBox="0 0 40 26"><rect x="1" y="1" width="23" height="23" rx="2" fill="#9a9a9a" stroke="#808080"/><path d="M5 6L12 12L5 18M14 19H21" stroke="#444" stroke-width="3" fill="none"/><path d="M29 10H39L34 16z" fill="#444"/></svg>
          <input type="text" placeholder="键入命令" aria-label="命令行">
          <button aria-label="命令历史"><svg width="14" height="8" viewBox="0 0 14 8"><path d="M7 0L14 8H0z"/></svg></button>
        </div>
      </div>

      <svg class="ucs" width="104" height="104" viewBox="0 0 104 104"><path d="M9 25V84M16 91H75M2 84H16V98H2zM11 2L20 10L29 2M20 10V19M82 73L99 91M99 73L82 91" fill="none" stroke="#ccc" stroke-width="2"/></svg>
    </main>

    <aside class="side right">
      <div class="side-tools modify">
        <button aria-label="删除"><svg class="ico"><use href="#m-erase"/></svg></button>
        <button aria-label="复制"><svg class="ico"><use href="#m-copy"/></svg></button>
        <button aria-label="镜像"><svg class="ico"><use href="#m-mirror"/></svg></button>
        <button aria-label="偏移"><svg class="ico"><use href="#m-offset"/></svg></button>
        <button aria-label="阵列"><svg class="ico"><use href="#m-array"/></svg></button>
        <button aria-label="移动"><svg class="ico"><use href="#m-move"/></svg></button>
        <button aria-label="旋转"><svg class="ico"><use href="#m-rotate"/></svg></button>
        <button aria-label="缩放"><svg class="ico"><use href="#m-scale"/></svg></button>
        <button aria-label="拉伸"><svg class="ico"><use href="#m-stretch"/></svg></button>
        <button aria-label="修剪"><svg class="ico"><use href="#m-trim"/></svg></button>
        <button aria-label="延伸"><svg class="ico"><use href="#m-extend"/></svg></button>
        <button aria-label="打断于点"><svg class="ico"><use href="#m-break1"/></svg></button>
        <button aria-label="打断"><svg class="ico"><use href="#m-break2"/></svg></button>
        <button aria-label="合并"><svg class="ico"><use href="#m-join"/></svg></button>
        <button aria-label="倒角"><svg class="ico"><use href="#m-chamfer"/></svg></button>
        <button aria-label="圆角"><svg class="ico"><use href="#m-fillet"/></svg></button>
        <button aria-label="光顺曲线"><svg class="ico"><use href="#m-blend"/></svg></button>
        <button aria-label="分解"><svg class="ico"><use href="#m-explode"/></svg></button>
      </div>
    </aside>
  </div>

  <footer class="statusbar">
    <div class="layout-tabs">
      <button class="layout-tab active">模型</button>
      <button class="layout-tab">布局1</button>
      <button class="layout-tab">布局2</button>
      <button class="layout-tab add" aria-label="新建布局"><svg width="14" height="14" viewBox="0 0 14 14"><path d="M7 1V13M1 7H13" stroke="#ccc" stroke-width="3"/></svg></button>
    </div>
    <div class="status">
      <div class="cell coords">2348.2817, 1363.0950, 0.0000</div>
      <button class="cell model">模型</button>
      <div class="cell gapped">
        <button class="st" aria-label="栅格"><svg width="26" height="26" viewBox="0 0 26 26"><path d="M5 1V25M10 1V25M15 1V25M20 1V25M1 5H25M1 10H25M1 15H25M1 20H25" stroke="#aaa" stroke-width="2"/></svg></button>
        <button class="st" aria-label="捕捉"><svg width="26" height="26" viewBox="0 0 26 26"><path d="M2 3H25M2 8H25M2 13H25M2 18H25M2 23H25" stroke="#aaa" stroke-width="2" stroke-dasharray="2 3"/></svg></button>
        <button class="drop white" aria-label="捕捉选项"></button>
      </div>
      <div class="cell joined"><button class="st" aria-label="推断约束"><svg width="26" height="26" viewBox="0 0 26 26"><path d="M13 22V3H20V9H13" fill="none" stroke="#bbb" stroke-width="2"/><rect x="5" y="16" width="8" height="8" fill="#ccc"/></svg></button></div>
      <div class="cell joined"><button class="st glow" aria-label="动态输入"><svg width="30" height="26" viewBox="0 0 30 26"><path d="M8 2V14M2 8H14" stroke="#3b9bff" stroke-width="2"/><rect x="11" y="15" width="17" height="8" rx="1" fill="#3b9bff"/></svg></button></div>
      <div class="cell snaps">
        <button class="st" aria-label="正交"><svg width="26" height="26" viewBox="0 0 26 26"><path d="M3 1V22H25M3 15H9V22" fill="none" stroke="#bbb" stroke-width="2"/></svg></button>
        <button class="st" aria-label="极轴"><svg width="26" height="26" viewBox="0 0 26 26"><circle cx="12" cy="13" r="10" fill="none" stroke="#bbb" stroke-width="2"/><path d="M12 13L20 3V13M12 13H26" fill="none" stroke="#bbb" stroke-width="2"/></svg></button>
        <button class="drop white" aria-label="极轴选项"></button>
        <button class="st" aria-label="等轴测"><svg width="30" height="32" viewBox="0 0 30 32"><path d="M2 3L28 29M15 1V31" stroke="#aaa" stroke-width="2"/></svg></button>
        <button class="drop white" aria-label="等轴测选项"></button>
      </div>
      <div class="cell joined">
        <button class="st glow" aria-label="对象追踪"><svg width="28" height="26" viewBox="0 0 28 26"><path d="M22 2L2 23H27" fill="none" stroke="#2f88ea" stroke-width="2"/><circle cx="12" cy="13" r="3" fill="#3b9bff"/></svg></button>
        <button class="st glow" aria-label="对象捕捉"><svg width="28" height="28" viewBox="0 0 28 28"><rect x="4" y="4" width="21" height="21" fill="none" stroke="#2f88ea" stroke-width="2"/><circle cx="6" cy="5" r="5" fill="#0a5a16"/></svg></button>
        <button class="drop white" aria-label="捕捉选项"></button>
      </div>
      <div class="cell lw"><button class="st glow" aria-label="线宽"><svg width="28" height="26" viewBox="0 0 28 26"><path d="M1 2H28M1 7H28" stroke="#3b9bff" stroke-width="2"/><path d="M1 13H16M19 13H28" stroke="#3b9bff" stroke-width="4"/><path d="M1 21H18" stroke="#3b9bff" stroke-width="7"/></svg></button></div>
      <div class="cell gear">
        <button class="st" aria-label="切换工作空间"><svg width="26" height="26" viewBox="0 0 26 26"><circle cx="13" cy="13" r="6" fill="none" stroke="#c4c4c4" stroke-width="5"/><circle cx="13" cy="13" r="9" fill="none" stroke="#c4c4c4" stroke-width="3" stroke-dasharray="4 3"/></svg></button>
        <button class="drop white" aria-label="工作空间列表"></button>
      </div>
      <div class="cell units">
        <button class="st" aria-label="单位"><svg width="10" height="26" viewBox="0 0 10 26"><path d="M1 1H9V25H1z" fill="#c4c4c4"/><path d="M5 5H9M5 9H9M5 13H9M5 17H9M5 21H9" stroke="#777"/></svg></button>
        <span>小数</span>
        <button class="drop white" aria-label="单位列表"></button>
      </div>
      <div class="cell square"><button class="st" aria-label="隔离对象"><svg width="28" height="28" viewBox="0 0 28 28"><path d="M3 2H12V13H3zM12 17L17 25H7z" fill="none" stroke="#bbb" stroke-width="2"/><circle cx="21" cy="13" r="5" fill="none" stroke="#bbb" stroke-width="2"/></svg></button></div>
      <div class="cell square"><button class="st glow" aria-label="硬件加速"><svg width="30" height="30" viewBox="0 0 30 30"><circle cx="15" cy="15" r="13" fill="#0f66cc"/><path d="M13 20L20 14" stroke="#5bb0ff" stroke-width="2"/></svg></button></div>
      <div class="cell square"></div>
      <div class="cell rest"></div>
    </div>
  </footer>

  <div class="monitor">
    <span class="ai">AI</span>
    <div class="speeds">
      <div><svg width="12" height="14" viewBox="0 0 12 14"><path d="M6 1L11 7H1zM6 6V13" fill="#2aa3e8" stroke="#2aa3e8" stroke-width="2"/></svg><span><b>0</b> K/s</span></div>
      <div><svg width="12" height="14" viewBox="0 0 12 14"><path d="M6 13L11 7H1zM6 1V8" fill="#f29a1d" stroke="#f29a1d" stroke-width="2"/></svg><span><b>0</b> K/s</span></div>
    </div>
    <div class="load">48<small>%</small>
      <svg width="98" height="98" viewBox="0 0 98 98"><path d="M53 3A47 47 0 0 1 57 95" fill="none" stroke="#4ecbc6" stroke-width="3"/></svg>
    </div>
  </div>

  <div class="ime"><i></i><span>CH</span><b>极</b></div>

</body>
</html>
```
FILE: styles.css
```css
* {
  box-sizing: border-box;
}

body {
  margin: 0;
  min-height: 100vh;
  display: flex;
  flex-direction: column;
  position: relative;
  overflow: hidden;
  background: #5c5c5c;
  color: #fff;
  font-family: "Noto Sans", "Noto Sans CJK SC", sans-serif;
  font-size: 20px;
}

button {
  margin: 0;
  padding: 0;
  border: 0;
  background: none;
  color: inherit;
  font: inherit;
  display: flex;
  align-items: center;
  justify-content: center;
  flex: none;
}

p {
  margin: 0;
}

svg {
  display: block;
  flex: none;
}

.sprite {
  position: absolute;
}

.ico {
  width: 46px;
  height: 46px;
  filter: drop-shadow(1px 1px 1px #333);
}

/* Letters inside icons */
.glyph {
  font-family: "Liberation Sans", sans-serif;
  font-weight: bold;
  text-anchor: middle;
}
.glyph.light { fill: #f2f2f2; }
.glyph.dark { fill: #3c3c3c; }
.glyph.black { fill: #111; }
.glyph.blue { fill: #8fb0ee; }
.glyph.navy { fill: #2c5596; }
.glyph.thin { font-weight: normal; }

/* Title bar */
.app-menu {
  position: absolute;
  left: 0;
  top: 0;
  width: 53px;
  height: 53px;
  background: linear-gradient(#8a8a8a, #b5b5b5);
  border: 1px solid #111;
  border-left: 0;
  border-top: 0;
  z-index: 2;
}

.titlebar {
  display: flex;
  height: 40px;
  padding-left: 53px;
  background: #fff;
  border-bottom: 2px solid #2e2e2e;
}

.quick {
  display: flex;
  align-items: center;
  justify-content: space-between;
  width: 76px;
  padding: 0 8px 0 15px;
  background: linear-gradient(#999, #777);
}

.title {
  flex: 1;
  margin: 0;
  display: flex;
  justify-content: center;
  align-items: center;
  gap: 20px;
  color: #111;
  font-size: 21px;
  font-weight: normal;
}

.infocenter {
  display: flex;
  align-items: center;
  width: 742px;
  background: linear-gradient(#9a9a9a, #747474);
}

.expand {
  width: 23px;
  height: 38px;
}

.search {
  width: 300px;
  height: 37px;
  padding: 0 6px;
  border: 1px solid #333;
  background: #6a6a6a;
  color: #fff;
  font-family: inherit;
  font-size: 18px;
  font-style: italic;
}
.search::placeholder {
  color: #bdbdbd;
}

.down {
  width: 0;
  height: 0;
  border: 4px solid transparent;
  border-top: 6px solid #fff;
  border-bottom: 0;
}

.find {
  width: 40px;
}

.signin {
  width: 192px;
  gap: 8px;
  padding-left: 5px;
  justify-content: flex-start;
  font-size: 20px;
}
.signin .down {
  margin-left: auto;
}

.exchange {
  width: 56px;
}

.a360 {
  width: 50px;
  gap: 8px;
}

.help {
  width: 81px;
  gap: 12px;
  padding-left: 10px;
}

.window-buttons {
  display: flex;
  justify-content: space-between;
  align-items: center;
  width: 243px;
  padding: 0 5px 0 66px;
}

/* Menu bar */
.menubar {
  display: flex;
  align-items: center;
  gap: 38px;
  height: 33px;
  padding-left: 73px;
  background: linear-gradient(#a2a2a2, #5e5e5e);
}
.menubar a {
  color: #fff;
  text-decoration: none;
  line-height: 32px;
}

.doc-buttons {
  margin-left: auto;
}

/* Drawing tabs */
.file-tabs {
  display: flex;
  align-items: flex-end;
  height: 41px;
  padding-left: 24px;
  background: #373737;
}

.file-tab {
  width: 224px;
  height: 36px;
  padding-left: 28px;
  justify-content: flex-start;
  color: #bbb;
  background: linear-gradient(#636363, #525252);
  clip-path: path("M0 36Q7 32 10 16Q13 0 22 0H198Q211 0 216 12L224 36z");
}

.file-tab.active {
  margin-left: -16px;
  padding-left: 25px;
  gap: 22px;
  width: 228px;
  color: #fff;
  background: linear-gradient(#8a8a8a, #5c5c5c);
  clip-path: path("M0 36Q5 30 8 14Q11 0 20 0H196Q208 0 213 14Q220 36 228 36z");
}

.new-tab {
  width: 36px;
  height: 25px;
  margin: 0 0 4px -3px;
  background: #565656;
  border-radius: 4px 16px 2px 14px;
}

/* Toolbars */
.toolbars {
  display: flex;
  flex-direction: column;
  gap: 6px;
  padding: 6px 0;
}

.row {
  display: flex;
  height: 52px;
  background: #5a5a5a;
}

.toolbar {
  display: flex;
  align-items: center;
  flex: none;
  border: 1px solid #333;
  border-left-width: 0;
}

.standard {
  width: 1385px;
  padding-left: 10px;
}

.styles {
  padding-left: 3px;
}

.layers {
  width: 620px;
  padding-left: 11px;
}

.properties {
  width: 779px;
  padding-left: 12px;
  gap: 8px;
}

.dimension {
  flex: 1;
  min-width: 0;
  overflow: hidden;
  padding-left: 9px;
}

.tool {
  width: 52px;
  height: 50px;
}
.tool.narrow { width: 44px; }
.tool.wide { width: 60px; }

.sep {
  width: 8px;
  height: 46px;
  flex: none;
  background: linear-gradient(#8c8c8c, #8c8c8c) 5px 0 / 1px 100% no-repeat,
              linear-gradient(#333, #333) 3px 0 / 1px 100% no-repeat;
}

.drop {
  width: 20px;
  height: 30px;
}
.drop::after {
  content: "";
  border: 6px solid transparent;
  border-top: 8px solid #999;
  border-bottom: 0;
}
.drop.dim::after {
  border-top-color: #3d3d3d;
}

/* Drop-down boxes sit at the top of their toolbar */
.combo {
  position: relative;
  display: flex;
  align-items: flex-start;
  flex: none;
  height: 50px;
  background: linear-gradient(#888, #888) 4px 0 / 1px 46px no-repeat;
}

.combo select {
  appearance: none;
  width: 100%;
  height: 30px;
  margin: 0;
  padding: 0 30px 0 26px;
  border: 0;
  border-radius: 0;
  background: #e3e3e3;
  color: #111;
  font-family: inherit;
  font-size: 20px;
}

.combo::after {
  content: "";
  position: absolute;
  right: 9px;
  top: 6px;
  width: 9px;
  height: 9px;
  border: solid #444;
  border-width: 0 1px 1px 0;
  transform: rotate(45deg);
}

.style-combo { width: 160px; }
.style-combo.tight select { padding-left: 7px; }

.layer-combo { width: 399px; }
.layer-combo select { padding-left: 115px; }

.layer-state {
  position: absolute;
  left: 2px;
  top: 1px;
}

.prop select {
  font-family: "Liberation Serif", "Noto Sans CJK SC", serif;
  font-size: 21px;
}
.prop.color { width: 200px; }
.prop.ltype { width: 213px; }
.prop.lweight { width: 166px; }
.prop.plot { width: 158px; }
.prop.ltype select { padding-left: 92px; }
.prop.lweight select { padding-left: 58px; }
.prop.plot select { padding-left: 12px; background: #d2d2d2; color: #8a8a8a; opacity: 1; }
.prop.plot::after { border-color: #bbb; }

.swatch {
  position: absolute;
  left: 8px;
  top: 8px;
  width: 13px;
  height: 14px;
  border: 2px solid #111;
  background: #1f1;
}

.line {
  position: absolute;
  left: 6px;
  top: 14px;
  height: 2px;
  background: #222;
}
.ltype .line { width: 80px; }
.lweight .line { width: 46px; }

/* Work area */
.workspace {
  flex: 1;
  display: flex;
  min-height: 0;
}

.side {
  flex: none;
  background: #5c5c5c;
  overflow: hidden;
}
.side.left { width: 59px; }
.side.right { width: 33px; padding-left: 6px; }

.side-tools {
  display: grid;
  grid-auto-rows: 1fr;
  padding-top: 10px;
  border: solid #383838;
  border-width: 1px 1px 2px 0;
}
.side-tools button {
  justify-content: flex-start;
}

.draw {
  width: 54px;
  height: 1026px;
  padding-left: 2px;
}

.modify {
  height: 925px;
  padding-left: 5px;
  border-width: 1px 0 2px 1px;
}

.canvas {
  position: relative;
  flex: 1;
  min-width: 0;
  background: #000;
  overflow: hidden;
}

/* The drawing itself */
.artwork {
  position: absolute;
  left: calc(50% - 480px);
  top: 232px;
  width: 1010px;
}

.pictures {
  display: flex;
  gap: 65px;
  padding-left: 46px;
}

.dialog {
  width: 492px;
  height: 305px;
  padding-left: 34px;
  background: linear-gradient(#d8d8d8, #d8d8d8) 5px 0 / 3px 100% no-repeat #fff;
  color: #000;
  overflow: hidden;
}

.group-above {
  height: 12px;
  margin-left: 7px;
  border: solid #ddd;
  border-width: 0 0 3px 3px;
}

.dialog fieldset {
  height: 290px;
  margin: 18px 0 0 7px;
  padding: 0 0 0 48px;
  border: solid #ddd;
  border-width: 3px 0 0 3px;
}

.dialog legend {
  margin-left: -34px;
  padding: 0 6px 0 10px;
  font-size: 43px;
  line-height: 44px;
}

.dialog label {
  display: block;
  margin: 40px 0 0 6px;
  font-size: 43px;
  line-height: 48px;
}

.latin {
  font-family: "Liberation Mono", monospace;
  font-size: 38px;
}

.spin {
  display: flex;
  width: 359px;
  height: 76px;
  margin-top: 14px;
  border: 3px solid #777;
  border-right-color: #aaa;
}
.spin input {
  flex: 1;
  min-width: 0;
  padding: 0 0 10px 6px;
  border: 0;
  color: #000;
  font-family: "Liberation Mono", monospace;
  font-size: 38px;
}
.spin-buttons {
  display: flex;
  flex-direction: column;
  gap: 2px;
  width: 60px;
  padding: 3px;
}
.spin-buttons button {
  flex: 1;
  background: #e8e8e8;
  border: 2px solid #aaa;
}

.break-icon {
  background: #5e5e5e;
  border: 2px solid #c8c8c8;
}

.caption {
  margin-top: 20px;
  color: #ff0;
  font-family: "Noto Serif CJK SC", "Noto Sans CJK SC", serif;
  font-size: 126px;
  line-height: 140px;
  white-space: nowrap;
}

.command {
  display: flex;
  margin-top: 13px;
  padding-left: 288px;
  color: #14f01e;
  font-family: "Noto Serif CJK SC", "Noto Sans CJK SC", serif;
  font-size: 122px;
  line-height: 140px;
}
.colon,
.key {
  font-family: "Liberation Sans", sans-serif;
  line-height: 150px;
}
.colon {
  width: 62px;
  text-align: center;
}
.key {
  color: #f00;
}

/* Overlays on the drawing area */
.viewcube {
  position: absolute;
  right: 16px;
  top: 14px;
}
.viewcube text {
  fill: #b5b5b5;
  font-family: "Noto Sans CJK SC", sans-serif;
  font-size: 25px;
  font-weight: 500;
  text-anchor: middle;
}
.viewcube .top-face {
  fill: #555;
  font-size: 38px;
  font-weight: normal;
}

.wcs {
  position: absolute;
  right: 79px;
  top: 226px;
  width: 64px;
  height: 23px;
  padding-left: 6px;
  justify-content: flex-start;
  border-radius: 5px;
  background: #7f7f82;
  color: #444;
  font-family: "Liberation Sans", sans-serif;
  font-size: 14px;
}
.wcs::after {
  content: "";
  margin-left: 8px;
  border: 4px solid transparent;
  border-top-color: #aaa;
  border-bottom: 0;
}

.navbar {
  position: absolute;
  right: 4px;
  top: 283px;
  background: #434343;
  border-radius: 5px;
}

.crosshair {
  position: absolute;
  right: 78px;
  bottom: 0;
}

.ucs {
  position: absolute;
  left: 19px;
  bottom: 18px;
}

.cmdline {
  position: absolute;
  left: 0;
  right: 667px;
  bottom: 1px;
  display: flex;
  align-items: flex-end;
}

.cmd-grip {
  background: linear-gradient(#5a5a5a, #2c2c2c);
  border-radius: 4px 0 0 0;
}

.cmd-box {
  flex: 1;
  display: flex;
  align-items: center;
  height: 50px;
  padding: 0 7px 0 8px;
  background: #b1b1b1;
  border: 1px solid #888;
  border-radius: 3px;
}
.cmd-box input {
  flex: 1;
  min-width: 0;
  padding: 0 0 4px 12px;
  border: 0;
  background: none;
  font-family: inherit;
  font-size: 38px;
  font-style: italic;
  height: 46px;
}
.cmd-box input::placeholder {
  color: #6e6e6e;
  font-weight: bold;
}

/* Status bar */
.statusbar {
  display: flex;
  justify-content: space-between;
  height: 48px;
  background: #373737;
  border-top: 1px solid #707070;
}

.layout-tabs {
  display: flex;
  padding-left: 12px;
}

.layout-tab {
  width: 93px;
  height: 29px;
  padding-bottom: 2px;
  margin-right: -1px;
  color: #c4c4c4;
  background: #5a5a5a;
  clip-path: polygon(0 0, 100% 0, 90% 90%, 84% 100%, 16% 100%, 10% 90%);
}
.layout-tab.active {
  width: 88px;
  color: #fff;
  font-weight: bold;
  background: linear-gradient(#5c5c5c, #8a8a8a);
}
.layout-tab.add {
  width: 38px;
  height: 27px;
  margin: 1px 0 0 6px;
  clip-path: polygon(22% 0, 100% 0, 84% 90%, 76% 100%, 0 100%, 4% 40%);
}

.status {
  display: flex;
  flex: none;
  width: 1285px;
  height: 43px;
  color: #fff;
}

.cell {
  display: flex;
  align-items: center;
  flex: none;
  background: #4d4d4d;
  border: 2px solid #747474;
  border-right-width: 1px;
  border-left-width: 1px;
}
.coords {
  width: 303px;
  margin-right: 2px;
  padding-right: 9px;
  justify-content: flex-end;
  font-size: 19px;
}
.model {
  width: 47px;
  margin-right: 3px;
}
.gapped { margin-right: 2px; }
.snaps { width: 170px; }
.lw { width: 43px; margin-right: 2px; }
.gear { width: 66px; margin-right: 3px; }
.units { width: 162px; margin-right: 3px; }
.units span { margin: 0 auto 0 8px; }
.square { width: 42px; margin-right: 2px; }
.rest { flex: 1; }

.st {
  width: 40px;
  height: 39px;
}
.glow svg {
  filter: drop-shadow(0 0 2px #0a6ff0);
}

.drop.white {
  width: 24px;
}
.drop.white::after {
  border-top-color: #fff;
}

/* Network monitor floating over the window */
.monitor {
  position: absolute;
  left: 19px;
  top: 1049px;
  width: 200px;
  height: 120px;
}

.ai {
  position: absolute;
  left: 97px;
  top: 0;
  font-family: "Liberation Sans", sans-serif;
  font-size: 36px;
  line-height: 36px;
  font-weight: bold;
  background: linear-gradient(100deg, #8fe060 20%, #5ce0a0 55%, #2fc4e8 75%);
  -webkit-background-clip: text;
  background-clip: text;
  color: transparent;
}

.speeds {
  position: absolute;
  left: 49px;
  right: 0;
  top: 35px;
  height: 76px;
  display: flex;
  flex-direction: column;
  justify-content: center;
  gap: 4px;
  padding: 0 14px 0 55px;
  border-radius: 0 38px 38px 0;
  background: #2a2b33;
  font-size: 18px;
  color: #9a9ca2;
}
.speeds div {
  display: flex;
  align-items: center;
  justify-content: space-between;
  line-height: 24px;
}
.speeds b {
  color: #ccc;
}

.load {
  position: absolute;
  left: 0;
  bottom: 0;
  width: 98px;
  height: 98px;
  display: flex;
  align-items: center;
  justify-content: center;
  border-radius: 50%;
  background: linear-gradient(#253746 55%, #124b66 58%);
  color: #d8e8ec;
  font-family: Roboto, sans-serif;
  font-size: 40px;
}
.load small {
  padding-top: 10px;
  font-size: 18px;
}
.load svg {
  position: absolute;
  left: 0;
  top: 0;
}

/* Input method bar */
.ime {
  position: absolute;
  right: 0;
  bottom: 0;
  width: 90px;
  height: 36px;
  display: flex;
  align-items: center;
  justify-content: space-between;
  padding: 0 7px 0 8px;
  background: #fff;
  color: #111;
  font-family: "Liberation Serif", "Noto Sans CJK SC", serif;
  font-size: 18px;
}
.ime i {
  height: 34px;
  border-left: 3px dotted #aaa;
}
.ime b {
  width: 28px;
  height: 28px;
  border-radius: 5px;
  background: #e8703c;
  color: #fff;
  font-size: 20px;
  line-height: 28px;
  text-align: center;
}
```
